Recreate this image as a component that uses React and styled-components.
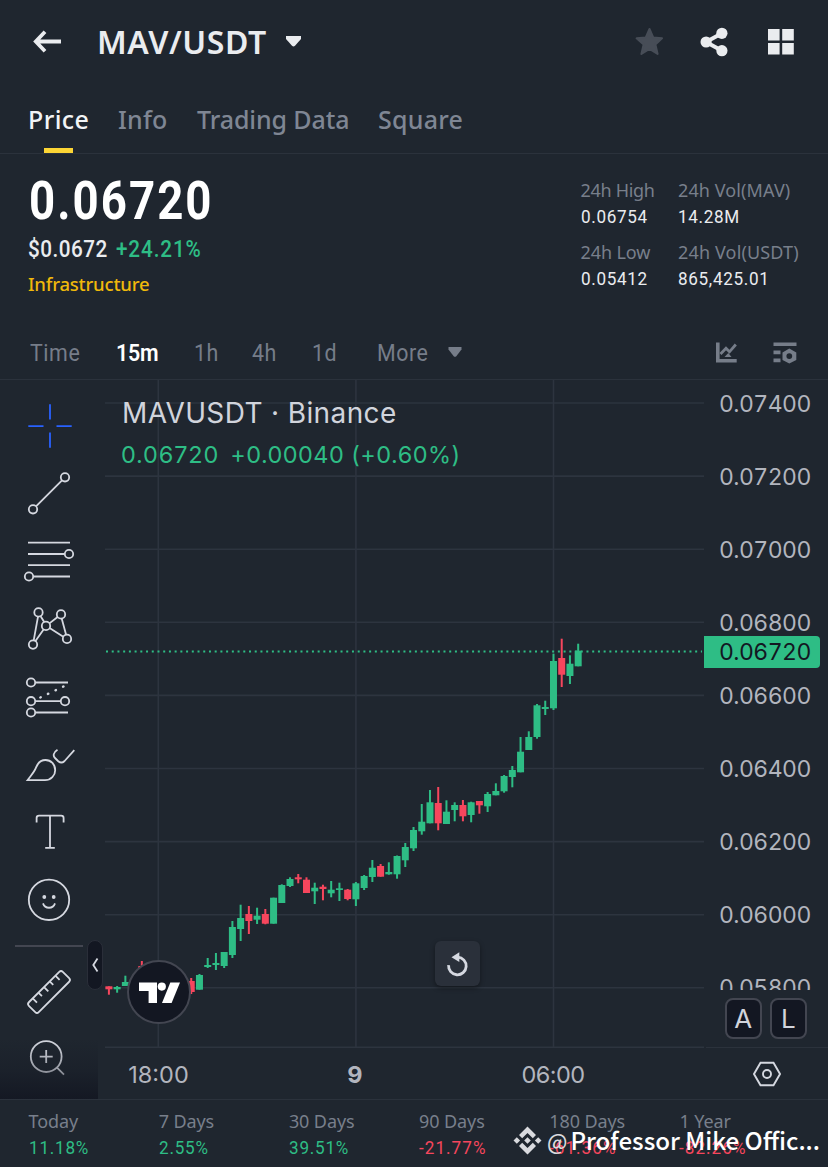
import React from "react"
import styled, { createGlobalStyle } from "styled-components"

const GlobalStyle = createGlobalStyle`
  * {
    box-sizing: border-box;
  }

  body {
    margin: 0;
    background: #1f262f;
    color: #eaecef;
    font-family: "Noto Sans", "Open Sans", sans-serif;
  }

  svg {
    display: block;
  }
`

const Screen = styled.div`
  position: relative;
  display: flex;
  flex-direction: column;
  width: 828px;
  height: 1167px;
  overflow: hidden;
  white-space: nowrap;
`

const Header = styled.header`
  display: flex;
  align-items: center;
  height: 83px;
  padding: 0 34px 0 33px;
`

const Pair = styled.h1`
  margin: 0 21px 0 35px;
  width: 168px;
  font-size: 32px;
  line-height: 40px;
  font-weight: 600;
  letter-spacing: 0.6px;
`

const HeaderActions = styled.div`
  display: flex;
  align-items: center;
  gap: 37px;
  margin-left: auto;
`

const Tabs = styled.nav`
  display: grid;
  grid-template-columns: 90px 79px 181px 100px;
  height: 71px;
  padding-left: 28px;
  border-bottom: 1px solid #2b323c;
`

const Tab = styled.div`
  display: flex;
  flex-direction: column;
  justify-content: space-between;
  padding-top: 18px;
  width: max-content;
  color: ${({ $active }) => ($active ? "#f2f4f6" : "#7f8694")};
  font-size: 25px;
  line-height: 36px;
  font-weight: 500;
  letter-spacing: ${({ $spacing }) => $spacing || 0}px;
`

const TabMark = styled.span`
  align-self: center;
  width: 29px;
  height: 5px;
  background: #fcd535;
`

const Summary = styled.section`
  display: flex;
  justify-content: space-between;
  height: 172px;
  padding: 19px 28px 0 28px;
`

// Roboto squeezed towards the proportions of a DIN face
const LastPrice = styled.div`
  height: 58px;
  margin-left: 1px;
  color: #fff;
  font-family: Roboto, sans-serif;
  font-size: 53px;
  line-height: 57px;
  font-weight: 700;
  letter-spacing: 2.4px;
  transform: scaleX(0.86);
  transform-origin: left;
`

const Converted = styled.div`
  display: flex;
  gap: 9px;
  height: 36px;
  font-family: Roboto, sans-serif;
  font-size: 23px;
  line-height: 37px;
  font-weight: 500;
  letter-spacing: 0.55px;
  transform: scaleX(0.9);
  transform-origin: left;
`

const Gain = styled.span`
  color: #2ebd85;
  letter-spacing: 1px;
`

const Category = styled.div`
  color: #f0b90b;
  font-size: 18.5px;
  line-height: 34px;
  font-weight: 500;
  letter-spacing: -0.2px;
`

const DayStats = styled.div`
  display: grid;
  grid-template-columns: 97.5px 122px;
  grid-auto-rows: 62px;
`

const DayStat = styled.div`
  display: flex;
  flex-direction: column;
  padding-top: 3px;
`

const StatLabel = styled.span`
  color: #787f8b;
  font-size: 18px;
  line-height: 28px;
  letter-spacing: ${({ $spacing }) => $spacing || 0}px;
`

const StatValue = styled.span`
  font-family: Roboto, sans-serif;
  font-size: 19px;
  line-height: 26px;
  letter-spacing: 0.75px;
  transform: scaleX(0.9);
  transform-origin: left;
`

const Intervals = styled.nav`
  display: flex;
  justify-content: space-between;
  height: 54px;
  padding: 0 31px 0 30px;
  border-bottom: 1px solid #2b323c;
`

const IntervalList = styled.div`
  display: grid;
  grid-template-columns: 86px 78px 57.5px 60.5px 64.5px 71.5px 14px;
  align-items: center;
`

const Interval = styled.span`
  padding-top: 2px;
  color: ${({ $active }) => ($active ? "#fff" : "#767d89")};
  font-family: Roboto, sans-serif;
  font-size: 23px;
  line-height: 30px;
  font-weight: ${({ $active }) => ($active ? 600 : 400)};
  letter-spacing: ${({ $active }) => ($active ? -0.2 : 0.6)}px;
  transform: scaleX(0.93);
  transform-origin: left;
`

const IntervalTools = styled.div`
  display: flex;
  align-items: center;
  gap: 36px;
`

const ChartArea = styled.main`
  position: relative;
  display: grid;
  grid-template-columns: 105px 599px 124px;
  height: 720px;
  border-bottom: 1px solid #2b323c;
`

const Toolbar = styled.aside`
  position: relative;
  width: 98px;
  height: 719px;
  padding-top: 12px;
  color: #d5d8e0;

  &::after {
    content: "";
    position: absolute;
    inset: auto 0 0 0;
    height: 60px;
    background: linear-gradient(
      rgba(19, 23, 34, 0),
      rgba(19, 23, 34, 0.3) 50%,
      rgba(19, 23, 34, 0.9)
    );
  }
`

const ToolDivider = styled.div`
  width: 68px;
  height: 2px;
  margin: 11px 0 11px 15px;
  background: #434651;
`

const Collapse = styled.button`
  position: absolute;
  left: 87px;
  top: 560px;
  width: 16px;
  height: 50px;
  padding: 0;
  border: 1px solid #2a2e39;
  border-radius: 8px;
  background: #131722;
`

const Pane = styled.div`
  position: relative;
  display: flex;
  flex-direction: column;
  width: 599px;
`

const Legend = styled.div`
  position: absolute;
  left: 17px;
  top: 14px;
  font-family: Inter, sans-serif;
`

const Symbol = styled.div`
  color: #d1d4dc;
  font-size: 28px;
  line-height: 38px;
  letter-spacing: 0.37px;
`

const Quote = styled.div`
  display: flex;
  gap: 11px;
  margin-left: -1px;
  color: #2ebd85;
  font-size: 23.5px;
  line-height: 46px;
  letter-spacing: 0.85px;
`

const Change = styled.span`
  letter-spacing: 0.45px;
`

const TimeAxis = styled.div`
  display: grid;
  grid-template-columns: 107px 286px 110px;
  height: 51px;
  color: #b2b5be;
  font-family: Inter, sans-serif;
  font-size: 23.5px;
  line-height: 53px;
  text-align: center;
`

const TimeLabel = styled.span`
  font-weight: ${({ $bold }) => ($bold ? 700 : 400)};
  letter-spacing: ${({ $spacing }) => $spacing || 0}px;
`

const TradingViewBadge = styled.div`
  position: absolute;
  left: 22px;
  top: 580px;
  width: 64px;
  height: 64px;
  border: 2px solid #434651;
  border-radius: 50%;
  background: #131722;
`

const ResetButton = styled.button`
  position: absolute;
  left: 330px;
  top: 561px;
  width: 45px;
  height: 45px;
  padding: 0;
  border: 0;
  border-radius: 6px;
  background: #2a303a;
  box-shadow: 0 2px 5px rgba(0, 0, 0, 0.4);
`

const PriceAxis = styled.div`
  position: relative;
  display: flex;
  flex-direction: column;
`

const PriceLabels = styled.div`
  height: 610px;
  padding: 0.5px 0 0 15px;
  overflow: hidden;
  color: #b2b5be;
`

const PriceLabel = styled.div`
  height: 73.1px;
  font-family: Inter, sans-serif;
  font-size: 23px;
  font-variant-numeric: tabular-nums;
  line-height: 46px;
  letter-spacing: -0.55px;
`

const PriceTag = styled.div`
  position: absolute;
  left: 0;
  top: 256px;
  width: 116px;
  height: 32px;
  padding-left: 15px;
  border-radius: 0 4px 4px 0;
  background: #2ebd85;
  color: #131722;
  font-family: Inter, sans-serif;
  font-size: 23px;
  font-variant-numeric: tabular-nums;
  line-height: 33px;
  letter-spacing: -0.55px;
`

const ScaleButtons = styled.div`
  display: flex;
  gap: 7.5px;
  height: 57px;
  padding: 8px 0 0 20.5px;
`

const ScaleButton = styled.button`
  width: 37.5px;
  height: 41px;
  padding: 0;
  border: 2px solid #434651;
  border-radius: 8px;
  background: #131722;
  color: #d1d4dc;
  font-family: Inter, sans-serif;
  font-size: 26px;
  line-height: 36px;
`

const AxisSettings = styled.div`
  display: flex;
  justify-content: center;
  align-items: center;
  height: 52px;
  margin-left: 2px;
  border-top: 1px solid #2b323c;
`

const Returns = styled.footer`
  display: grid;
  grid-template-columns: repeat(6, 130.2px);
  height: 67px;
  padding: 8px 0 0 28.5px;
`

const Return = styled.div`
  display: flex;
  flex-direction: column;
`

const ReturnLabel = styled.span`
  color: #787f8b;
  font-size: 18px;
  line-height: 27px;
  letter-spacing: -0.1px;
`

const ReturnValue = styled.span`
  color: ${({ $down }) => ($down ? "#f6465d" : "#2ebd85")};
  font-family: Roboto, sans-serif;
  font-size: 19px;
  line-height: 26px;
  letter-spacing: ${({ $down }) => ($down ? 1.15 : 0.85)}px;
  transform: scaleX(0.9);
  transform-origin: left;
`

const Watermark = styled.div`
  position: absolute;
  left: 513px;
  top: 1121px;
  display: flex;
  align-items: center;
  gap: 5px;
  color: #fff;
  font-family: "Noto Sans CJK SC", sans-serif;
  font-size: 24.1px;
  line-height: 38px;
  font-weight: 500;
`

const At = styled.span`
  margin-right: 3px;
  color: #d9dade;
  font-size: 21px;
`

const GREEN = "#2ebd85"
const RED = "#f6465d"

// [slot, up, body top, body bottom, high, low]
const candles = [
  [-6, 0, 986.3, 989.3, 986.3, 994.7],
  [-5, 1, 987, 989.3, 986, 992.7],
  [-4, 1, 982, 986, 975.7, 986],
  [-2, 0, 966, 980, 961, 984],
  [4, 0, 981, 992, 978, 994],
  [5, 1, 975, 989.7, 974, 989.7],
  [6, 1, 965, 967, 958, 968],
  [7, 1, 963, 965, 953, 970],
  [8, 1, 952, 966, 952, 968],
  [9, 1, 927, 955, 921, 958],
  [10, 1, 918, 929, 904.7, 941],
  [11, 0, 914, 921, 906, 934],
  [12, 1, 915.7, 919.7, 907.7, 924],
  [13, 0, 914, 923.7, 909, 924.3],
  [14, 1, 897.7, 923.7, 897.7, 923.7],
  [15, 1, 885, 903, 884.3, 903],
  [16, 1, 879, 886, 877.3, 887],
  [17, 0, 877.3, 879.3, 874, 883.3],
  [18, 0, 879.7, 893, 877.3, 893],
  [19, 1, 887.7, 891.3, 882.7, 904],
  [20, 0, 886.7, 889, 884.7, 900.3],
  [21, 1, 889.7, 893.3, 881, 897.3],
  [22, 1, 888.3, 890, 882.7, 901],
  [23, 0, 889.7, 899, 889, 900.3],
  [24, 1, 883.3, 899.3, 882, 906],
  [25, 1, 876, 888, 875, 890],
  [26, 1, 867.7, 877, 860, 882],
  [27, 0, 866, 876.7, 864, 876.7],
  [28, 1, 872, 874.3, 862.3, 874.7],
  [29, 1, 856, 874.3, 855.5, 878.7],
  [30, 1, 847, 860.3, 843, 867],
  [31, 1, 830, 848.3, 827, 851],
  [32, 1, 821.7, 831.3, 804, 834.7],
  [33, 1, 802.3, 823.3, 790, 823.3],
  [34, 0, 803, 823.3, 787, 830.3],
  [35, 1, 811.7, 824, 800.3, 824],
  [36, 1, 805, 810, 802.3, 821.3],
  [37, 0, 805, 816.3, 800, 821.3],
  [38, 1, 802.3, 815, 801.7, 822.3],
  [39, 0, 801, 805.3, 801, 813.7],
  [40, 1, 794, 806.3, 792, 812],
  [41, 1, 791, 795.3, 783.3, 795.3],
  [42, 1, 776, 791.3, 775, 792.7],
  [43, 1, 770, 777, 766, 787.3],
  [44, 1, 751.7, 772.3, 737, 772.3],
  [45, 1, 737, 750, 731.3, 750],
  [46, 1, 705.3, 737, 704, 738.7],
  [47, 1, 707, 709, 700.7, 715],
  [48, 1, 661, 708.3, 653.7, 710],
  [49, 0, 658, 674.7, 638.7, 687],
  [50, 1, 663.7, 676, 655.3, 684],
  [51, 1, 650.7, 666.3, 643.7, 666.3],
]

const prices = [
  "0.07400",
  "0.07200",
  "0.07000",
  "0.06800",
  "0.06600",
  "0.06400",
  "0.06200",
  "0.06000",
  "0.05800",
]

const returns = [
  ["Today", "11.18%"],
  ["7 Days", "2.55%"],
  ["30 Days", "39.51%"],
  ["90 Days", "-21.77%"],
  ["180 Days", "-61.36%"],
  ["1 Year", "-82.26%"],
]

const Chart = () => (
  <svg width="599" height="668" viewBox="105 380 599 668">
    <g stroke="#2d343f" strokeWidth="1.6">
      {prices.map((price, i) => (
        <line key={price} x1="105" x2="704" y1={403 + i * 73.1} y2={403 + i * 73.1} />
      ))}
      {[158.3, 355.9, 553.5].map(x => (
        <line key={x} x1={x} x2={x} y1="380" y2="1047" />
      ))}
      <line x1="105" x2="704" y1="1047.4" y2="1047.4" />
    </g>
    <line
      x1="106"
      x2="702"
      y1="651.6"
      y2="651.6"
      stroke={GREEN}
      strokeWidth="2"
      strokeDasharray="2 3.72"
    />
    {candles.map(([slot, up, top, bottom, high, low]) => {
      const x = 158.3 + slot * 8.233
      return (
        <g key={slot} fill={up ? GREEN : RED}>
          <rect x={x - 1} y={high} width="2" height={low - high} />
          <rect x={x - 3.5} y={top} width="7" height={bottom - top} />
        </g>
      )
    })}
  </svg>
)

const Tool = ({ children }) => (
  <svg
    width="98"
    height="67.7"
    viewBox="0 0 98 67.7"
    fill="none"
    stroke="currentColor"
    strokeWidth="1.8"
  >
    {children}
  </svg>
)

const Tools = () => (
  <Toolbar>
    <Tool>
      <path d="M50 12.3v15.2M50 40.6v15.2M28.3 34.2h15.2M56.5 34.2h15.2" stroke="#2962ff" />
    </Tool>
    <Tool>
      <circle cx="65" cy="17.3" r="4.2" />
      <circle cx="33" cy="49.3" r="4.2" />
      <path d="M36 46.3l26-26" />
    </Tool>
    <Tool>
      <path d="M28 15.6h42M28 27h37M28 38.1h42M33 49.5h37" />
      <circle cx="69" cy="27" r="4.2" />
      <circle cx="29" cy="49.5" r="4.2" />
    </Tool>
    <Tool>
      <circle cx="38.5" cy="17.4" r="4.2" />
      <circle cx="61" cy="19.4" r="4.2" />
      <circle cx="46" cy="30.9" r="4.2" />
      <circle cx="33" cy="49.6" r="4.2" />
      <circle cx="67" cy="43.9" r="4.2" />
      <path d="M38 21.6L33.7 45.4M40.5 21.1l3.7 6M43.6 34.4l-8.3 11.8M49.4 28.4l8.2-6.4M49.6 33.1l13.7 8.6M61.7 23.5l4.4 16.3" />
    </Tool>
    <Tool>
      <circle cx="31" cy="19.5" r="4.2" />
      <circle cx="31" cy="38.2" r="4.2" />
      <circle cx="65" cy="38.2" r="4.2" />
      <circle cx="31" cy="49.5" r="4.2" />
      <path d="M35 19.5h33M35 38.2h26M35 49.5h33" />
      <path
        d="M40.3 34.5L63.9 23.3"
        strokeWidth="2.4"
        strokeLinecap="round"
        strokeDasharray="0.5 7.9"
      />
    </Tool>
    <Tool>
      <path d="M27.5 50.2H45C51 50.2 55.2 45.5 55.2 40.2C55.2 34.5 51 30 45.5 30C41 30 38 32.5 36.2 37.2C34.2 42.5 30.5 46 27.5 50.2Z" />
      <path d="M57.5 19.8C53.2 22.6 52.8 25.8 55 28L58 31C60.2 33 62.6 33 64.6 31L74.3 20.2" />
    </Tool>
    <Tool>
      <path d="M36.6 24.5V20Q36.6 17.6 39 17.6H61.2Q63.6 17.6 63.6 20V24.5M50 17.6V49.8M45.2 49.8H54.8" />
    </Tool>
    <Tool>
      <circle cx="49" cy="33.8" r="20.2" />
      <path d="M43 37.4C45 43.2 53 43.2 55 37.4" />
      <circle cx="44.3" cy="31" r="1.9" fill="currentColor" stroke="none" />
      <circle cx="53.7" cy="31" r="1.9" fill="currentColor" stroke="none" />
    </Tool>
    <ToolDivider />
    <Tool>
      <g transform="translate(49 34) rotate(-45)">
        <rect x="-24" y="-7" width="48" height="14" rx="2.5" />
        <path d="M-16-7v6M-8-7v5M0-7v6M8-7v5M16-7v6" />
      </g>
    </Tool>
    <Tool>
      <circle cx="46.2" cy="31.6" r="15.4" />
      <path d="M46.2 25.1v13M39.7 31.6h13M57 42.6l7 7" />
    </Tool>
  </Toolbar>
)

const HeaderBar = () => (
  <Header>
    <svg width="29" height="26" viewBox="0 0 29 26" fill="none" stroke="#eaecef" strokeWidth="3.8">
      <path d="M28 12.5H3M12 2.8L2.8 12.5L12 22.2" />
    </svg>
    <Pair>MAV/USDT</Pair>
    <svg width="15" height="14" viewBox="0 0 15 14" fill="#eaecef">
      <path d="M0 1h15v3L9 10.8q-1.5 1.4-3 0L0 4z" />
    </svg>
    <HeaderActions>
      <svg width="29" height="30" viewBox="0 0 29 30" fill="#474d57">
        <path
          d="M15.5 2L19.2 10.4L28 11.3L21.4 17.4L23.6 27L15.5 22L7.4 27L9.6 17.4L2.6 11.3L11.8 10.4Z"
          stroke="#474d57"
          strokeWidth="2"
          strokeLinejoin="round"
        />
      </svg>
      <svg width="28" height="30" viewBox="0 0 28 30" fill="#eaecef">
        <path d="M6 15L22 6.3M6 15L22 23.7" stroke="#eaecef" strokeWidth="4" />
        <circle cx="6.1" cy="15" r="5.6" />
        <circle cx="21.9" cy="6.3" r="5.6" />
        <circle cx="21.9" cy="23.7" r="5.6" />
      </svg>
      <svg width="29" height="30" viewBox="0 0 29 30" fill="#eaecef">
        <path d="M3 2h11.6v11.6H3zM17.2 2h11.6v11.6H17.2zM3 16h11.6v11.6H3zM17.2 16h11.6v11.6H17.2z" />
      </svg>
    </HeaderActions>
  </Header>
)

const App = () => {
  return (
    <>
      <GlobalStyle />
      <Screen>
        <HeaderBar />
        <Tabs>
          <Tab $active $spacing={0.4}>
            Price
            <TabMark />
          </Tab>
          <Tab $spacing={0.2}>Info</Tab>
          <Tab $spacing={-0.1}>Trading Data</Tab>
          <Tab $spacing={0.25}>Square</Tab>
        </Tabs>

        <Summary>
          <div>
            <LastPrice>0.06720</LastPrice>
            <Converted>
              <span>$0.0672</span>
              <Gain>+24.21%</Gain>
            </Converted>
            <Category>Infrastructure</Category>
          </div>
          <DayStats>
            <DayStat>
              <StatLabel $spacing={-0.3}>24h High</StatLabel>
              <StatValue>0.06754</StatValue>
            </DayStat>
            <DayStat>
              <StatLabel $spacing={0.1}>24h Vol(MAV)</StatLabel>
              <StatValue>14.28M</StatValue>
            </DayStat>
            <DayStat>
              <StatLabel $spacing={-0.1}>24h Low</StatLabel>
              <StatValue>0.05412</StatValue>
            </DayStat>
            <DayStat>
              <StatLabel $spacing={0.15}>24h Vol(USDT)</StatLabel>
              <StatValue>865,425.01</StatValue>
            </DayStat>
          </DayStats>
        </Summary>

        <Intervals>
          <IntervalList>
            <Interval>Time</Interval>
            <Interval $active>15m</Interval>
            <Interval>1h</Interval>
            <Interval>4h</Interval>
            <Interval>1d</Interval>
            <Interval>More</Interval>
            <svg width="14" height="14" viewBox="0 0 14 14" fill="#767d89">
              <path d="M0.5 1h13v2.5L8.3 10.2q-1.3 1.2-2.6 0L0.5 3.5z" />
            </svg>
          </IntervalList>
          <IntervalTools>
            <svg width="22" height="22" viewBox="0 0 22 22" fill="none" stroke="#767d89">
              <path d="M2.8 0.5V18.8H21.7" strokeWidth="3.6" />
              <path d="M5.5 12L11 6.3L14.5 9.8L20.8 2.5" strokeWidth="2.8" />
              <path d="M9.5 15L13.3 11L16.5 15Z" fill="#767d89" stroke="none" />
            </svg>
            <svg width="24" height="22" viewBox="0 0 24 22" fill="#767d89">
              <path d="M0.5 0.5h23v3.6h-23zM0.5 8.5h7v3.8h-7zM0.5 16.5h7v3.8h-7z" />
              <path
                fillRule="evenodd"
                d="M16.3 6.5L23.3 10.4V17.9L16.3 21.5L9.5 17.9V10.4ZM16.3 11.2a2.9 2.9 0 1 0 0 5.8a2.9 2.9 0 1 0 0-5.8Z"
              />
            </svg>
          </IntervalTools>
        </Intervals>

        <ChartArea>
          <Tools />
          <Pane>
            <Chart />
            <TimeAxis>
              <TimeLabel>18:00</TimeLabel>
              <TimeLabel $bold>9</TimeLabel>
              <TimeLabel $spacing={-0.6}>06:00</TimeLabel>
            </TimeAxis>
            <Legend>
              <Symbol>MAVUSDT · Binance</Symbol>
              <Quote>
                <span>0.06720</span>
                <Change>+0.00040 (+0.60%)</Change>
              </Quote>
            </Legend>
            <TradingViewBadge>
              <svg width="60" height="60" viewBox="129 962 60 60" fill="#fff">
                <path d="M139 982.6H157V1003H148.6V991H139Z" />
                <circle cx="161.8" cy="986.6" r="4.1" />
                <path d="M170.3 982.6H180L171.6 1003H162Z" />
              </svg>
            </TradingViewBadge>
            <ResetButton>
              <svg width="45" height="45" viewBox="435 941 45 45" fill="none">
                <path
                  d="M448.6 965.2A8.8 8.8 0 1 0 457.8 957.2"
                  stroke="#d5d8e0"
                  strokeWidth="2.8"
                />
                <path d="M451.5 957.2L459.3 952.2V962Z" fill="#d5d8e0" />
              </svg>
            </ResetButton>
          </Pane>
          <PriceAxis>
            <PriceLabels>
              {prices.map(price => (
                <PriceLabel key={price}>{price}</PriceLabel>
              ))}
            </PriceLabels>
            <ScaleButtons>
              <ScaleButton>A</ScaleButton>
              <ScaleButton>L</ScaleButton>
            </ScaleButtons>
            <AxisSettings>
              <svg
                width="28"
                height="26"
                viewBox="0 0 28 26"
                fill="none"
                stroke="#d5d8e0"
                strokeWidth="1.9"
              >
                <path d="M7.5 1.7H20.5L27 13L20.5 24.3H7.5L1 13Z" />
                <circle cx="14" cy="13" r="4" />
              </svg>
            </AxisSettings>
            <PriceTag>0.06720</PriceTag>
          </PriceAxis>
          <Collapse>
            <svg width="14" height="48" viewBox="0 0 14 48" fill="none" stroke="#d5d8e0" strokeWidth="1.8">
              <path d="M9.5 17.5L5.3 24L9.5 30.5" />
            </svg>
          </Collapse>
        </ChartArea>

        <Returns>
          {returns.map(([label, value]) => (
            <Return key={label}>
              <ReturnLabel>{label}</ReturnLabel>
              <ReturnValue $down={value.startsWith("-")}>{value}</ReturnValue>
            </Return>
          ))}
        </Returns>

        <Watermark>
          <svg width="29" height="29" viewBox="0 0 29 29" fill="#d9dade">
            <path d="M14.5 0.5L23 9L19.8 12.2L14.5 6.9L9.2 12.2L6 9ZM14.5 28.5L6 20L9.2 16.8L14.5 22.1L19.8 16.8L23 20ZM14.5 11.2L17.8 14.5L14.5 17.8L11.2 14.5ZM3.8 11.2L7.1 14.5L3.8 17.8L0.5 14.5ZM25.2 11.2L28.5 14.5L25.2 17.8L21.9 14.5Z" />
          </svg>
          <span>
            <At>@</At>
            Professor Mike Offic...
          </span>
        </Watermark>
      </Screen>
    </>
  )
}

export default App
